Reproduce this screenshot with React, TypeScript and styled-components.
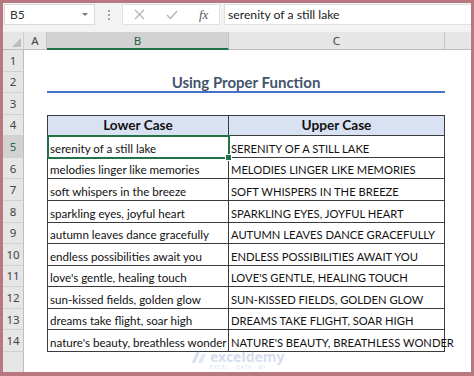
import * as React from 'react';
import styled, { createGlobalStyle, css } from 'styled-components';

const GlobalStyle = createGlobalStyle`
  html, body {
    margin: 0;
    padding: 0;
    background: #ffffff;
  }
  * {
    box-sizing: border-box;
  }
`;

const ROW_H = 21.57;

const Frame = styled.div`
  position: relative;
  width: 474px;
  height: 376px;
  overflow: hidden;
  border: 3px solid #b9777f;
  border-bottom-width: 4px;
  background: #ffffff;
  font-family: Lato, 'Liberation Sans', sans-serif;
`;

const FormulaBar = styled.div`
  display: flex;
  align-items: center;
  height: 29px;
  padding: 1px 0 7px 1px;
  background: #f3f3f3;
`;

const NameBox = styled.div`
  display: flex;
  align-items: center;
  justify-content: space-between;
  width: 91px;
  height: 21px;
  padding: 0 6px 0 5px;
  background: #ffffff;
  border: 1px solid #d9d9d9;
  font-size: 12px;
  color: #333333;
`;

const DropArrow = styled.span`
  width: 0;
  height: 0;
  border-left: 3px solid transparent;
  border-right: 3px solid transparent;
  border-top: 3px solid #777777;
`;

const Grip = styled.div`
  display: flex;
  flex-direction: column;
  align-items: center;
  justify-content: center;
  gap: 2px;
  width: 27px;
  height: 21px;
`;

const GripDot = styled.span`
  width: 2px;
  height: 2px;
  background: #a6a6a6;
`;

const ButtonBox = styled.div`
  display: flex;
  align-items: center;
  justify-content: space-around;
  width: 98px;
  height: 21px;
  background: #ffffff;
  border: 1px solid #e1e1e1;
  margin-right: 4px;
`;

const Fx = styled.span`
  font-family: 'Liberation Serif', serif;
  font-style: italic;
  font-size: 13px;
  color: #555555;
`;

const FormulaInput = styled.div`
  flex: 1;
  display: flex;
  align-items: center;
  height: 21px;
  padding-left: 3px;
  background: #ffffff;
  border: 1px solid #e1e1e1;
  border-right: none;
  font-size: 12.2px;
  color: #222222;
`;

const Row = styled.div<{ $h: number }>`
  display: flex;
  height: ${p => p.$h}px;
`;

const Corner = styled.div`
  position: relative;
  width: 21px;
  background: #e6e6e6;
  border-right: 1px solid #cfcfcf;
  border-bottom: 1px solid #bdbdbd;
  &::after {
    content: '';
    position: absolute;
    right: 2px;
    bottom: 2px;
    width: 0;
    height: 0;
    border-left: 9px solid transparent;
    border-bottom: 9px solid #bdbdbd;
  }
`;

const ColHead = styled.div<{ $w?: number; $active?: boolean }>`
  ${p => (p.$w ? css`width: ${p.$w}px;` : css`flex: 1;`)}
  display: flex;
  align-items: center;
  justify-content: center;
  font-family: 'Noto Sans', sans-serif;
  font-size: 11.5px;
  color: ${p => (p.$active ? '#1f5e3d' : '#444444')};
  background: ${p => (p.$active ? '#d2d2d2' : '#e6e6e6')};
  border-right: 1px solid #c6c6c6;
  border-bottom: ${p => (p.$active ? '2px solid #217346' : '1px solid #bdbdbd')};
  &:last-child {
    border-right: none;
  }
`;

const RowHead = styled.div<{ $active?: boolean }>`
  width: 21px;
  display: flex;
  align-items: center;
  justify-content: center;
  font-family: 'Noto Sans', sans-serif;
  font-size: 11.5px;
  color: ${p => (p.$active ? '#1f6b43' : '#444444')};
  background: ${p => (p.$active ? '#d2d2d2' : '#e6e6e6')};
  border-right: 1px solid #bdbdbd;
  border-bottom: 1px solid #d0d0d0;
`;

type Edge = { top?: boolean; left?: boolean };

const Cell = styled.div<{
  $w?: number;
  $boxed?: boolean;
  $edge?: Edge;
  $head?: boolean;
  $title?: boolean;
  $upper?: boolean;
  $selected?: boolean;
}>`
  position: relative;
  ${p => (p.$w ? css`width: ${p.$w}px;` : css`flex: 1;`)}
  display: flex;
  align-items: flex-end;
  padding: 0 0 2px 2px;
  font-size: ${p => (p.$upper ? '11.2px' : '11.6px')};
  color: #111111;
  white-space: nowrap;
  overflow: visible;
  ${p =>
    p.$boxed &&
    css`
      border-right: 1px solid #3b3b3b;
      border-bottom: 1px solid #3b3b3b;
      ${p.$edge?.top && 'border-top: 1px solid #3b3b3b;'}
      ${p.$edge?.left && 'border-left: 1px solid #3b3b3b;'}
    `}
  ${p =>
    p.$head &&
    css`
      justify-content: center;
      padding-left: 0;
      font-weight: 700;
      font-size: 13.6px;
      background: #d9e2f3;
    `}
  ${p =>
    p.$title &&
    css`
      justify-content: center;
      padding: 0 0 0 0;
      font-weight: 700;
      font-size: 15px;
      color: #44546a;
      border-bottom: 2px solid #4472c4;
    `}
  ${p =>
    p.$selected &&
    css`
      &::after {
        content: '';
        position: absolute;
        left: -1px;
        top: -1px;
        right: -2px;
        bottom: -2px;
        border: 2px solid #217346;
      }
      &::before {
        content: '';
        position: absolute;
        right: -4px;
        bottom: -4px;
        width: 5px;
        height: 5px;
        background: #217346;
        border: 1px solid #ffffff;
        z-index: 2;
      }
    `}
`;

const Overflow = styled.span`
  position: relative;
  z-index: 1;
`;

const Watermark = styled.div`
  position: absolute;
  left: 188px;
  top: 347px;
  display: flex;
  align-items: flex-start;
  gap: 3px;
  opacity: 0.2;
  pointer-events: none;
`;

const MarkText = styled.div`
  display: flex;
  flex-direction: column;
  line-height: 1;
`;

const MarkName = styled.span`
  font-family: 'Noto Sans', sans-serif;
  font-weight: 700;
  font-size: 14px;
  color: #2f5fb3;
`;

const MarkTag = styled.span`
  margin-top: 1px;
  font-family: 'Noto Sans', sans-serif;
  font-size: 5px;
  letter-spacing: 1px;
  color: #2f5fb3;
`;

const rows: [string, string][] = [
  ['serenity of a still lake', 'SERENITY OF A STILL LAKE'],
  ['melodies linger like memories', 'MELODIES LINGER LIKE MEMORIES'],
  ['soft whispers in the breeze', 'SOFT WHISPERS IN THE BREEZE'],
  ['sparkling eyes, joyful heart', 'SPARKLING EYES, JOYFUL HEART'],
  ['autumn leaves dance gracefully', 'AUTUMN LEAVES DANCE GRACEFULLY'],
  ['endless possibilities await you', 'ENDLESS POSSIBILITIES AWAIT YOU'],
  ["love's gentle, healing touch", "LOVE'S GENTLE, HEALING TOUCH"],
  ['sun-kissed fields, golden glow', 'SUN-KISSED FIELDS, GOLDEN GLOW'],
  ['dreams take flight, soar high', 'DREAMS TAKE FLIGHT, SOAR HIGH'],
  ["nature's beauty, breathless wonder", "NATURE'S BEAUTY, BREATHLESS WONDER"],
];

const W_A = 23;
const W_B = 182;
const W_C = 216;

const CrossIcon = () => (
  <svg width="11" height="11" viewBox="0 0 11 11">
    <path d="M1 1 L10 10 M10 1 L1 10" stroke="#b3b3b3" strokeWidth="1.2" fill="none" />
  </svg>
);

const CheckIcon = () => (
  <svg width="12" height="10" viewBox="0 0 12 10">
    <path d="M1 5 L4.5 8.5 L11 1" stroke="#b3b3b3" strokeWidth="1.3" fill="none" />
  </svg>
);

const LogoIcon = () => (
  <svg width="16" height="14" viewBox="0 0 16 14">
    <path d="M1 13 L6 1 L9 1 L4 13 Z" fill="#2f5fb3" />
    <path d="M7 13 L11 4 L15 4 L11 13 Z" fill="#6a8fd0" />
  </svg>
);

export default function App() {
  return (
    <>
      <GlobalStyle />
      <Frame>
        <FormulaBar>
          <NameBox>
            B5
            <DropArrow />
          </NameBox>
          <Grip>
            <GripDot />
            <GripDot />
            <GripDot />
          </Grip>
          <ButtonBox>
            <CrossIcon />
            <CheckIcon />
            <Fx>fx</Fx>
          </ButtonBox>
          <FormulaInput>serenity of a still lake</FormulaInput>
        </FormulaBar>

        <Row $h={18}>
          <Corner />
          <ColHead $w={W_A}>A</ColHead>
          <ColHead $w={W_B} $active>B</ColHead>
          <ColHead $w={W_C}>C</ColHead>
          <ColHead />
        </Row>

        <Row $h={ROW_H}>
          <RowHead>1</RowHead>
          <Cell $w={W_A} />
          <Cell $w={W_B} />
          <Cell $w={W_C} />
          <Cell />
        </Row>
        <Row $h={ROW_H}>
          <RowHead>2</RowHead>
          <Cell $w={W_A} />
          <Cell $w={W_B + W_C} $title>
            Using Proper Function
          </Cell>
          <Cell />
        </Row>
        <Row $h={ROW_H}>
          <RowHead>3</RowHead>
          <Cell $w={W_A} />
          <Cell $w={W_B} />
          <Cell $w={W_C} />
          <Cell />
        </Row>
        <Row $h={ROW_H}>
          <RowHead>4</RowHead>
          <Cell $w={W_A} />
          <Cell $w={W_B} $boxed $head $edge={{ top: true, left: true }}>
            Lower Case
          </Cell>
          <Cell $w={W_C} $boxed $head $edge={{ top: true }}>
            Upper Case
          </Cell>
          <Cell />
        </Row>
        {rows.map(([lower, upper], i) => (
          <Row $h={ROW_H} key={i}>
            <RowHead $active={i === 0}>{i + 5}</RowHead>
            <Cell $w={W_A} />
            <Cell $w={W_B} $boxed $edge={{ left: true }} $selected={i === 0}>
              <Overflow>{lower}</Overflow>
            </Cell>
            <Cell $w={W_C} $boxed $upper>
              {upper}
            </Cell>
            <Cell />
          </Row>
        ))}
        <Row $h={30}>
          <RowHead />
          <Cell $w={W_A} />
          <Cell />
        </Row>

        <Watermark>
          <LogoIcon />
          <MarkText>
            <MarkName>exceldemy</MarkName>
            <MarkTag>EXCEL · DATA · BI</MarkTag>
          </MarkText>
        </Watermark>
      </Frame>
    </>
  );
}
